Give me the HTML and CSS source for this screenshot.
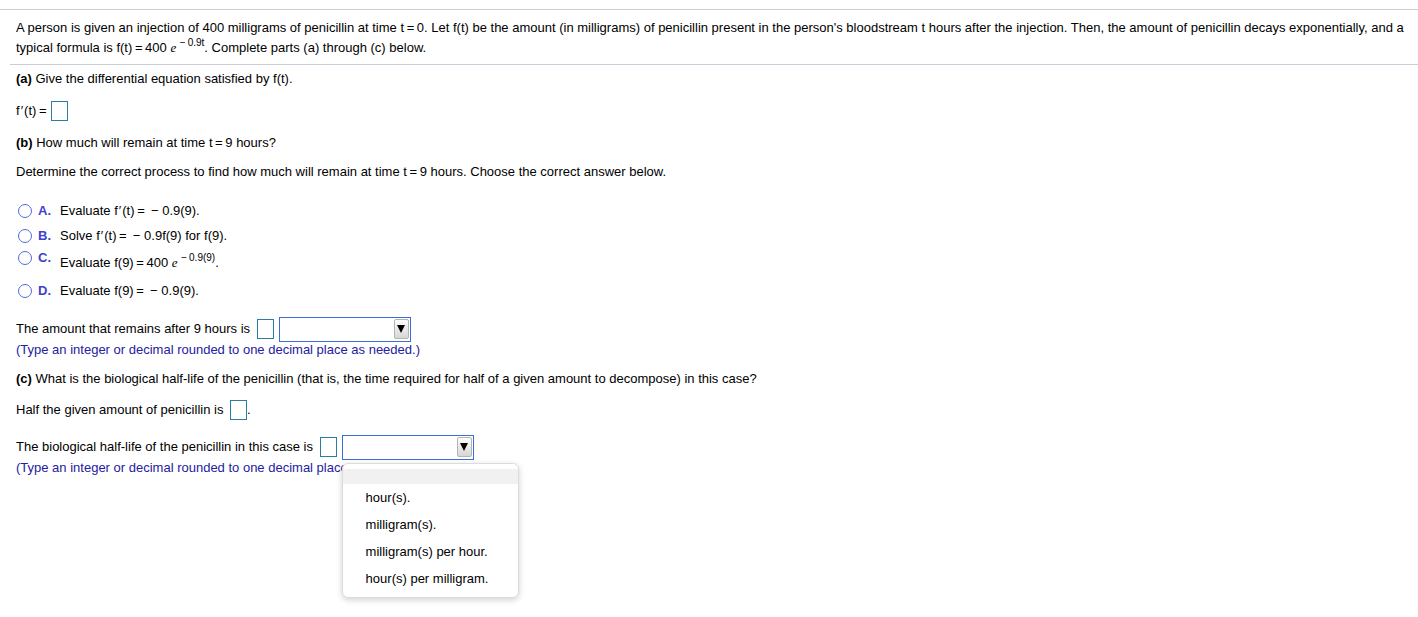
FILE: index.html
```html
<!DOCTYPE html>
<html>
<head>
<meta charset="utf-8">
<link rel="stylesheet" href="styles.css">
</head>
<body>
<div class="top-rule"></div>
<div class="intro">A person is given an injection of 400 milligrams of penicillin at time t&#8201;=&#8201;0. Let f(t) be the amount (in milligrams) of penicillin present in the person's bloodstream t hours after the injection. Then, the amount of penicillin decays exponentially, and a<br>typical formula is f(t)&#8201;=&#8201;400 <span class="e">e</span> <sup class="sup">&#8722;&#8201;0.9t</sup>. Complete parts (a) through (c) below.</div>
<div class="content">
  <div class="row r-a"><b>(a)</b> Give the differential equation satisfied by f(t).</div>
  <div class="row r-f">f<span class="prime">&#8242;</span>(t)&#8201;=&#8201;<span class="box"></span></div>
  <div class="row r-b"><b>(b)</b> How much will remain at time t&#8201;=&#8201;9 hours?</div>
  <div class="row r-det">Determine the correct process to find how much will remain at time t&#8201;=&#8201;9 hours. Choose the correct answer below.</div>
  <div class="options">
    <div class="opt opt-a"><span class="radio"></span><span class="lbl">A.</span><span class="otext">Evaluate f<span class="prime">&#8242;</span>(t)&#8201;=&#8201; &#8722; 0.9(9).</span></div>
    <div class="opt opt-b"><span class="radio"></span><span class="lbl">B.</span><span class="otext">Solve f<span class="prime">&#8242;</span>(t)&#8201;=&#8201; &#8722; 0.9f(9) for f(9).</span></div>
    <div class="opt opt-c"><span class="radio"></span><span class="lbl">C.</span><span class="otext otext-c">Evaluate f(9)&#8201;=&#8201;400 <span class="e">e</span> <sup class="sup">&#8722;&#8201;0.9(9)</sup>.</span></div>
    <div class="opt opt-d"><span class="radio"></span><span class="lbl">D.</span><span class="otext">Evaluate f(9)&#8201;=&#8201; &#8722; 0.9(9).</span></div>
  </div>
  <div class="row r-amt">The amount that remains after 9 hours is <span class="box"></span><span class="select"><span class="arrow"><span class="tri"></span></span></span></div>
  <div class="row hint">(Type an integer or decimal rounded to one decimal place as needed.)</div>
  <div class="row r-c"><b>(c)</b> What is the biological half-life of the penicillin (that is, the time required for half of a given amount to decompose) in this case?</div>
  <div class="row r-half">Half the given amount of penicillin is <span class="box"></span>.</div>
  <div class="row r-bio">The biological half-life of the penicillin in this case is <span class="box"></span><span class="select-wrap"><span class="select"><span class="arrow"><span class="tri"></span></span></span><div class="menu"><div class="menu-hl"></div><div class="menu-item">hour(s).</div><div class="menu-item">milligram(s).</div><div class="menu-item">milligram(s) per hour.</div><div class="menu-item">hour(s) per milligram.</div></div></span></div>
  <div class="row hint">(Type an integer or decimal rounded to one decimal place as needed.)</div>
</div>
</body>
</html>
```
FILE: styles.css
```css
html, body {
  margin: 0;
  padding: 0;
  background: #ffffff;
}
body {
  font-family: "Liberation Sans", Arial, sans-serif;
  font-size: 13px;
  color: #000;
  width: 1418px;
  height: 617px;
  overflow: hidden;
}
.top-rule {
  height: 9px;
  border-bottom: 1px solid #c9ced8;
}
.intro {
  margin-left: 10px;
  padding: 8px 0 6px 6px;
  line-height: 20px;
  white-space: nowrap;
  border-bottom: 1px solid #c9ced8;
}
.e {
  font-family: "Liberation Serif", "Times New Roman", serif;
  font-style: italic;
  font-size: 13px;
}
.sup {
  font-size: 10px;
  line-height: 1;
  vertical-align: 6px;
}
.prime {
  display: inline-block;
  margin: 0 1px 0 1px;
}
.content {
  padding-left: 16px;
}
.row {
  line-height: 20px;
  height: 20px;
  display: flex;
  align-items: center;
  white-space: pre;
}
.r-a { margin-top: 4px; }
.r-f { margin-top: 12px; }
.r-b { margin-top: 12px; }
.r-det { margin-top: 9px; }
.box {
  display: inline-block;
  width: 15px;
  height: 18px;
  border: 1px solid #2a7ea3;
  background: #fff;
  flex: none;
}
.r-f .box { margin-left: 2px; }
.options {
  margin-top: 19px;
  display: flex;
  flex-direction: column;
}
.opt {
  display: flex;
  align-items: flex-start;
  line-height: 20px;
  white-space: pre;
}
.opt-b { margin-top: 5px; }
.opt-c { margin-top: 2px; }
.opt-d { margin-top: 8px; }
.radio {
  width: 12px;
  height: 12px;
  border: 1px solid #4d6fd6;
  border-radius: 50%;
  margin: 3px 6px 0 2px;
  flex: none;
}
.lbl {
  font-weight: bold;
  color: #3f3fcf;
  width: 22px;
  flex: none;
}
.otext-c {
  padding-top: 5px;
}
.r-amt {
  margin-top: 18px;
}
.r-amt .box, .r-bio .box {
  margin-left: 3px;
}
.select {
  display: inline-flex;
  align-items: center;
  justify-content: flex-end;
  box-sizing: border-box;
  width: 132px;
  height: 25px;
  border: 1px solid #3a6ed6;
  background: #fff;
  margin-left: 5px;
  padding-right: 1px;
  flex: none;
}
.arrow {
  display: inline-flex;
  align-items: center;
  justify-content: center;
  box-sizing: border-box;
  width: 15px;
  height: 20px;
  background: linear-gradient(#fdfdfd, #d6d6d6);
  border: 1px solid #b4b4b4;
  border-radius: 2px;
}
.tri {
  width: 0;
  height: 0;
  border-left: 4px solid transparent;
  border-right: 4px solid transparent;
  border-top: 8px solid #000;
}
.hint {
  color: #23219f;
  margin-top: 1px;
}
.r-c { margin-top: 9px; }
.r-half { margin-top: 11px; }
.r-half .box { margin-left: 3px; }
.r-bio { margin-top: 17px; }
.select-wrap {
  position: relative;
  display: inline-flex;
  flex: none;
}
.menu {
  position: absolute;
  left: 5px;
  top: 28px;
  width: 177px;
  box-sizing: border-box;
  background: #fff;
  border: 1px solid #dcdcdc;
  border-radius: 6px;
  box-shadow: 0 2px 6px rgba(0,0,0,0.18);
  padding: 5px 0 5px 0;
  z-index: 10;
  white-space: normal;
  line-height: normal;
}
.menu-hl {
  height: 15px;
  background: #f1f1f1;
}
.menu-item {
  height: 27px;
  line-height: 27px;
  padding-left: 23px;
  color: #000;
  font-size: 13px;
  white-space: nowrap;
}
```
